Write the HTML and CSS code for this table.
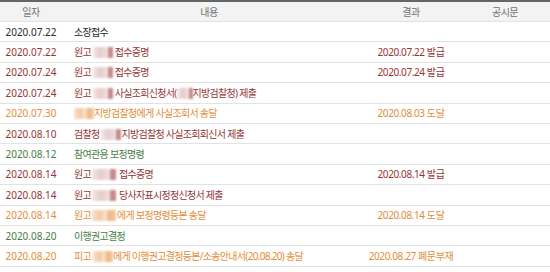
FILE: index.html
```html
<!DOCTYPE html>
<html lang="ko">
<head>
<meta charset="utf-8">
<link rel="stylesheet" href="styles.css">
</head>
<body>
<table class="case">
  <colgroup>
    <col class="c-date"><col class="c-text"><col class="c-res"><col class="c-pub">
  </colgroup>
  <thead>
    <tr><th>일자</th><th>내용</th><th>결과</th><th class="pub">공시문</th></tr>
  </thead>
  <tbody>
    <tr class="k"><td class="d">2020.07.22</td><td class="t">소장접수</td><td class="r"></td><td></td></tr>
    <tr class="red"><td class="d">2020.07.22</td><td class="t">원고 <span class="bl bl-r"></span> 접수증명</td><td class="r">2020.07.22 발급</td><td></td></tr>
    <tr class="red"><td class="d">2020.07.24</td><td class="t">원고 <span class="bl bl-r"></span> 접수증명</td><td class="r">2020.07.24 발급</td><td></td></tr>
    <tr class="red"><td class="d">2020.07.24</td><td class="t">원고 <span class="bl bl-r"></span> 사실조회신청서(<span class="bl bl-r sm"></span>지방검찰청) 제출</td><td class="r"></td><td></td></tr>
    <tr class="org"><td class="d">2020.07.30</td><td class="t"><span class="bl bl-o"></span>지방검찰청에게 사실조회서 송달</td><td class="r">2020.08.03 도달</td><td></td></tr>
    <tr class="red"><td class="d">2020.08.10</td><td class="t">검찰청 <span class="bl bl-r"></span>지방검찰청 사실조회회신서 제출</td><td class="r"></td><td></td></tr>
    <tr class="grn"><td class="d">2020.08.12</td><td class="t">참여관용 보정명령</td><td class="r"></td><td></td></tr>
    <tr class="red"><td class="d">2020.08.14</td><td class="t">원고<span class="bl bl-r wide"></span> 접수증명</td><td class="r">2020.08.14 발급</td><td></td></tr>
    <tr class="red"><td class="d">2020.08.14</td><td class="t">원고<span class="bl bl-r wide"></span> 당사자표시정정신청서 제출</td><td class="r"></td><td></td></tr>
    <tr class="org"><td class="d">2020.08.14</td><td class="t">원고<span class="bl bl-o wide"></span>에게 보정명령등본 송달</td><td class="r">2020.08.14 도달</td><td></td></tr>
    <tr class="grn"><td class="d">2020.08.20</td><td class="t">이행권고결정</td><td class="r"></td><td></td></tr>
    <tr class="org"><td class="d">2020.08.20</td><td class="t">피고 <span class="bl bl-o"></span>에게 이행권고결정등본/소송안내서(20.08.20) 송달</td><td class="r">2020.08.27 폐문부재</td><td></td></tr>
  </tbody>
</table>
</body>
</html>
```

FILE: styles.css
```css
html, body {
  margin: 0;
  padding: 0;
  background: #ffffff;
}

body {
  font-family: "Noto Sans", "Noto Sans CJK KR", sans-serif;
  font-size: 10px;
  color: #2a2a2a;
}

.case {
  width: 550px;
  border-collapse: collapse;
  table-layout: fixed;
  border-top: 2px solid #666666;
}

.c-date { width: 62px; }
.c-text { width: 294px; }
.c-res  { width: 110px; }
.c-pub  { width: 84px; }

.case th {
  background: #f3f3f3;
  color: #707070;
  font-weight: normal;
  height: 18px;
  padding: 1px 0 0;
  line-height: 17px;
  border-bottom: 1px solid #e2e2e2;
  letter-spacing: -0.5px;
}

.case th.pub {
  padding-right: 6px;
}

.case td {
  padding: 2.5px 0;
  line-height: 14.4px;
  border-bottom: 1px solid #e2e2e2;
  white-space: nowrap;
}

.case td.d {
  text-align: center;
}

.case td.t {
  padding-left: 12px;
  letter-spacing: -0.7px;
}

.case td.r {
  text-align: center;
  letter-spacing: -0.4px;
}

.k   { color: #2a2a2a; }
.red { color: #943535; }
.org { color: #e38d3a; }
.grn { color: #468046; }

.bl {
  display: inline-block;
  width: 20px;
  height: 11px;
  vertical-align: -2px;
  filter: blur(1px);
}

.bl.sm { width: 16px; }
.bl.wide { width: 24px; margin: 0 1px; }

.bl-r {
  background: linear-gradient(90deg, #f4e8e8 0%, #e6cccc 35%, #ecd8d8 60%, #f3e6e6 72%, #c58a8a 78%, #c58a8a 100%);
}

.bl-o {
  background: linear-gradient(90deg, #f8e2cc 0%, #f2c9a3 35%, #f8e6d4 55%, #eeb885 70%, #f3c9a0 100%);
}
```
